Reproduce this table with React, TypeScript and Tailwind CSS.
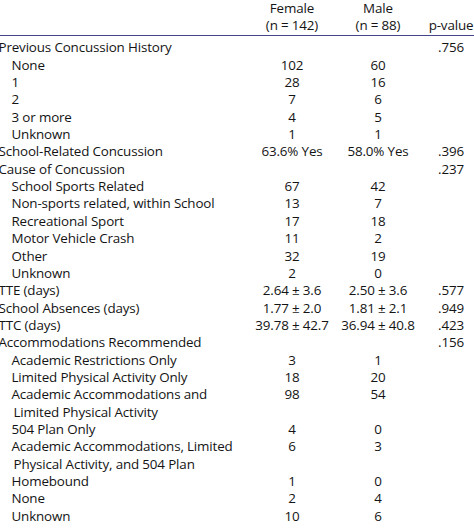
import React from "react";

type Row = { label: string; level: 0 | 1 | 2; f?: string; m?: string; p?: string };

const rows: Row[] = [
  { label: "Previous Concussion History", level: 0, p: ".756" },
  { label: "None", level: 1, f: "102", m: "60" },
  { label: "1", level: 1, f: "28", m: "16" },
  { label: "2", level: 1, f: "7", m: "6" },
  { label: "3 or more", level: 1, f: "4", m: "5" },
  { label: "Unknown", level: 1, f: "1", m: "1" },
  { label: "School-Related Concussion", level: 0, f: "63.6% Yes", m: "58.0% Yes", p: ".396" },
  { label: "Cause of Concussion", level: 0, p: ".237" },
  { label: "School Sports Related", level: 1, f: "67", m: "42" },
  { label: "Non-sports related, within School", level: 1, f: "13", m: "7" },
  { label: "Recreational Sport", level: 1, f: "17", m: "18" },
  { label: "Motor Vehicle Crash", level: 1, f: "11", m: "2" },
  { label: "Other", level: 1, f: "32", m: "19" },
  { label: "Unknown", level: 1, f: "2", m: "0" },
  { label: "TTE (days)", level: 0, f: "2.64 ± 3.6", m: "2.50 ± 3.6", p: ".577" },
  { label: "School Absences (days)", level: 0, f: "1.77 ± 2.0", m: "1.81 ± 2.1", p: ".949" },
  { label: "TTC (days)", level: 0, f: "39.78 ± 42.7", m: "36.94 ± 40.8", p: ".423" },
  { label: "Accommodations Recommended", level: 0, p: ".156" },
  { label: "Academic Restrictions Only", level: 1, f: "3", m: "1" },
  { label: "Limited Physical Activity Only", level: 1, f: "18", m: "20" },
  { label: "Academic Accommodations and", level: 1, f: "98", m: "54" },
  { label: "Limited Physical Activity", level: 2 },
  { label: "504 Plan Only", level: 1, f: "4", m: "0" },
  { label: "Academic Accommodations, Limited", level: 1, f: "6", m: "3" },
  { label: "Physical Activity, and 504 Plan", level: 2 },
  { label: "Homebound", level: 1, f: "1", m: "0" },
  { label: "None", level: 1, f: "2", m: "4" },
  { label: "Unknown", level: 1, f: "10", m: "6" },
];

function labelPad(level: 0 | 1 | 2) {
  if (level === 0) return "pl-0";
  if (level === 1) return "pl-[13px]";
  return "pl-[15px]";
}

export default function App() {
  return (
    <div
      className="w-[474px] h-[528px] overflow-hidden bg-white text-[#141414] text-[13.4px] leading-[17.35px] tracking-[-0.15px]"
      style={{ fontFamily: '"Open Sans", "Noto Sans", sans-serif' }}
    >
      <div className="border-b border-[#46468a] pb-[0px]">
        <div className="grid grid-cols-[250px_84px_88px_1fr]">
          <div />
          <div className="text-center">Female</div>
          <div className="text-center">Male</div>
          <div />
        </div>
        <div className="grid grid-cols-[250px_84px_88px_1fr]">
          <div />
          <div className="text-center">(n = 142)</div>
          <div className="text-center">(n = 88)</div>
          <div className="pl-[6px] text-center whitespace-nowrap">p-value</div>
        </div>
      </div>
      <div className="pt-[3.7px]">
        {rows.map((r, i) => (
          <div key={i} className="grid grid-cols-[250px_84px_88px_1fr]">
            <div className={`ml-[-1.5px] whitespace-nowrap ${labelPad(r.level)}`}>{r.label}</div>
            <div className="text-center whitespace-nowrap">{r.f ?? ""}</div>
            <div className="text-center whitespace-nowrap">{r.m ?? ""}</div>
            <div className="pl-[6px] text-center whitespace-nowrap">{r.p ?? ""}</div>
          </div>
        ))}
      </div>
    </div>
  );
}
